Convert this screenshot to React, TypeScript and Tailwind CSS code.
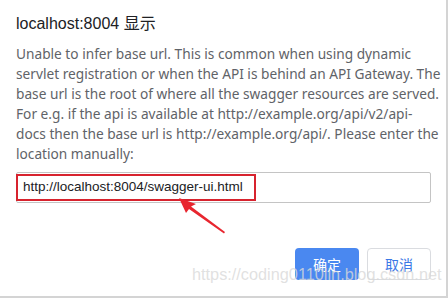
const lines = [
  "Unable to infer base url. This is common when using dynamic",
  "servlet registration or when the API is behind an API Gateway. The",
  "base url is the root of where all the swagger resources are served.",
  "For e.g. if the api is available at http://example.org/api/v2/api-",
  "docs then the base url is http://example.org/api/. Please enter the",
  "location manually:",
];

const App = () => {
  return (
    <div className="w-[448px] h-[298px] bg-[#d4d4d4] overflow-hidden font-['Noto_Sans','Noto_Sans_CJK_SC',sans-serif]">
      <div className="relative w-[446px] h-[296px] bg-white pl-4 pr-[15px] pt-3">
        {/* Title */}
        <h1 className="text-[16px] leading-6 text-[#202124] font-['Liberation_Sans','Noto_Sans_CJK_SC',sans-serif]">
          localhost:8004 显示
        </h1>

        {/* Message */}
        <div className="mt-2 text-[13.7px] leading-5 text-[#5f6368] whitespace-nowrap">
          {lines.map((l) => (
            <div key={l}>{l}</div>
          ))}
        </div>

        {/* Prompt input */}
        <div className="mt-2 h-[31px] border border-[#c4c4c4] rounded-[2px] flex items-center px-[6px] text-[13.5px] text-[#202124] font-['Liberation_Sans',sans-serif]">
          http://localhost:8004/swagger-ui.html
        </div>

        {/* Buttons */}
        <div className="mt-[45px] flex justify-end gap-2 font-['Noto_Sans_CJK_SC',sans-serif]">
          <button className="w-16 h-8 rounded bg-[#4a88f0] text-white text-[14px]">确定</button>
          <button className="w-16 h-8 rounded border border-[#dadce0] bg-white text-[#3a78e6] text-[14px]">取消</button>
        </div>

        {/* red annotation box */}
        <div className="absolute left-4 top-[174px] w-[240px] h-[27px] border-2 border-[#d7232e]" />

        {/* red arrow */}
        <svg className="absolute left-0 top-0" width="446" height="296">
          <polygon points="179,198 196,204 191,206.5 225,232 224,233.5 189,209 186,213" fill="#e8262f" />
        </svg>

        {/* watermark */}
        <div className="absolute left-[192px] top-[262px] text-[16.3px] text-[#d9d9d9]/80 font-['Liberation_Sans',sans-serif]">
          https://coding0110lin.blog.csdn.net
        </div>
      </div>
    </div>
  );
};

export default App;
